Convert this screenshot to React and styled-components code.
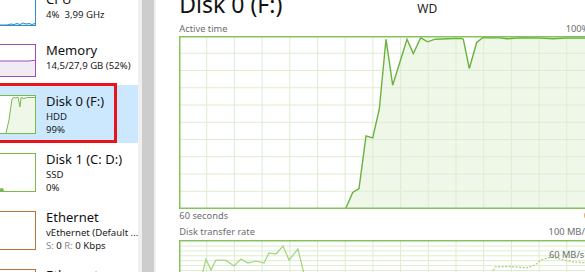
import React from 'react';
import styled, { createGlobalStyle } from 'styled-components';

const GlobalStyle = createGlobalStyle`
  html, body {
    margin: 0;
    padding: 0;
    background: #fff;
    overflow: hidden;
  }
  body {
    font-family: 'Segoe UI', 'Noto Sans', sans-serif;
  }
  #root {
    width: 585px;
    height: 272px;
    overflow: hidden;
  }
`;

const colors = {
  cpu: '#2f8dcb',
  cpuFill: '#dcedf8',
  memory: '#a04bbf',
  memoryFill: '#f1ecf3',
  disk: '#78ba4e',
  diskFill: '#eef7e8',
  ethernet: '#b8723a',
  gridLine: '#dcedd0',
  chartBorder: '#86c35f',
  chartLine: '#6ab23e',
  chartLineLight: '#a3d37a',
  label: '#6d6d6d',
};

const StyledWindow = styled.div`
  display: flex;
  width: 585px;
  height: 272px;
  overflow: hidden;
`;

const StyledSidebar = styled.div`
  flex: 0 0 168px;
  margin-left: -30px;
  margin-top: -17px;
`;

const StyledItem = styled.div`
  position: relative;
  display: flex;
  align-items: flex-start;
  gap: 10px;
  box-sizing: border-box;
  height: ${({ $lines }) => ($lines === 3 ? 58 : 51)}px;
  padding: 10px 0 0 6px;
  background: ${({ $selected }) => ($selected ? '#cce8ff' : 'transparent')};

  &::after {
    content: '';
    display: ${({ $selected }) => ($selected ? 'block' : 'none')};
    position: absolute;
    top: -2px;
    bottom: 0;
    left: 18px;
    right: 21px;
    border: 3px solid #e8141c;
  }
`;

const StyledThumb = styled.div`
  flex: 0 0 60px;
  height: ${({ $h }) => $h}px;
  box-sizing: border-box;
  border: 1px solid ${({ $color }) => $color};
  background: #fff;
  overflow: hidden;

  svg {
    display: block;
  }
`;

const StyledText = styled.div`
  flex: 1;
  min-width: 0;
  margin-top: -3px;
  color: #1a1a1a;
`;

const StyledItemTitle = styled.div`
  font-size: 13px;
  line-height: 18px;
  color: #111;
  white-space: nowrap;
`;

const StyledItemLine = styled.div`
  font-size: 9.6px;
  line-height: 13px;
  white-space: nowrap;
  overflow: hidden;
`;

const StyledMuted = styled.span`
  color: #8a8a8a;
`;

const StyledScrollbar = styled.div`
  flex: 0 0 18px;
  box-sizing: border-box;
  padding: 0 2px 0 4px;
  background: #f0f0f0;

  div {
    height: 100%;
    background: #cdcdcd;
  }
`;

const StyledMain = styled.div`
  flex: 0 0 410px;
  padding-left: 23px;
`;

const StyledHeader = styled.div`
  display: grid;
  grid-template-columns: 238px auto;
  align-items: baseline;
  height: 28px;
  margin-top: -10px;
`;

const StyledTitle = styled.h1`
  margin: 0;
  font-size: 23px;
  line-height: 28px;
  font-weight: 400;
  color: #111;
  white-space: nowrap;
`;

const StyledModel = styled.span`
  font-size: 12px;
  color: #222;
`;

const StyledLabelRow = styled.div`
  display: flex;
  justify-content: space-between;
  margin-top: ${({ $mt }) => $mt || 0}px;
  font-size: 9.3px;
  line-height: 14px;
  color: ${colors.label};
  white-space: nowrap;
`;

const StyledChart = styled.div`
  position: relative;
  height: ${({ $h }) => $h}px;
  margin-top: ${({ $mt }) => $mt || 0}px;

  svg {
    display: block;
  }
`;

const StyledChartNote = styled.span`
  position: absolute;
  top: 8px;
  right: 5px;
  font-size: 9.3px;
  line-height: 14px;
  color: ${colors.label};
`;

const toPath = (pts) => pts.map(([x, y]) => `${x},${y}`).join(' ');

const CpuThumb = () => {
  const pts = [
    [0, 31], [30, 31], [34, 30], [37, 30.5], [40, 29.5], [43, 30.5], [46, 29], [49, 30],
    [52, 29.5], [55, 30.5], [58, 29.5], [60, 30],
  ];
  return (
    <svg width="58" height="31" viewBox="0 0 58 31">
      <polygon points={`${toPath(pts)} 60,31 0,31`} fill={colors.cpuFill} />
      <polyline points={toPath(pts)} fill="none" stroke={colors.cpu} strokeWidth="1" />
    </svg>
  );
};

const MemoryThumb = () => {
  const pts = [[0, 16], [52, 16], [56, 15.5], [60, 15]];
  return (
    <svg width="58" height="31" viewBox="0 0 58 31">
      <polygon points={`${toPath(pts)} 60,31 0,31`} fill={colors.memoryFill} />
      <polyline points={toPath(pts)} fill="none" stroke={colors.memory} strokeWidth="1" />
    </svg>
  );
};

const DiskThumb = () => {
  const pts = [
    [29, 37], [32, 24], [34, 10], [35, 3], [37, 1.5], [39, 2], [41, 1], [43, 11],
    [44, 1.5], [47, 2.5], [50, 1.5], [58, 1.5],
  ];
  return (
    <svg width="58" height="37" viewBox="0 0 58 37">
      <polygon points={`${toPath(pts)} 58,37 29,37`} fill={colors.diskFill} />
      <polyline points={toPath(pts)} fill="none" stroke={colors.disk} strokeWidth="1" />
    </svg>
  );
};

const IdleDiskThumb = () => (
  <svg width="58" height="37" viewBox="0 0 58 37">
    <polygon points="23,37 23,34.5 26,34 27,37" fill={colors.disk} />
  </svg>
);

const NetworkThumb = ({ spikes }) => (
  <svg width="58" height="37" viewBox="0 0 58 37">
    {spikes &&
      [31, 54].map((x) => (
        <line key={x} x1={x} y1="3" x2={x} y2="37" stroke={colors.ethernet} strokeWidth="1" />
      ))}
  </svg>
);

const SidebarItem = ({ lines, selected, color, thumb, title, children }) => (
  <StyledItem $lines={lines} $selected={selected}>
    <StyledThumb $color={color} $h={lines === 3 ? 39 : 33}>
      {thumb}
    </StyledThumb>
    <StyledText>
      <StyledItemTitle>{title}</StyledItemTitle>
      {children}
    </StyledText>
  </StyledItem>
);

const COL = 27.7;

const Grid = ({ width, height, rowStep, rowStart }) => {
  const cols = [];
  for (let x = COL; x < width; x += COL) cols.push(x);
  const rows = [];
  for (let y = rowStart; y < height; y += rowStep) rows.push(y);
  return (
    <g stroke={colors.gridLine} strokeWidth="1">
      {cols.map((x) => (
        <line key={`c${x}`} x1={x} y1="0" x2={x} y2={height} />
      ))}
      {rows.map((y) => (
        <line key={`r${y}`} x1="0" y1={y} x2={width} y2={y} />
      ))}
    </g>
  );
};

const activeTime = [
  [345.7, 210], [352.7, 194], [359, 190], [366, 137.3], [372.7, 139.3], [379.3, 110.7],
  [386, 40.7], [392.7, 86.7], [407, 40.7], [413.3, 55], [420.7, 39.3], [427.7, 43.3],
  [435, 40.7], [453.3, 40], [461.7, 40], [463.3, 40.7], [469.3, 70], [476.7, 44],
  [482.7, 39.3], [500, 39.3], [506.7, 40.3], [520, 39.3], [540, 39.5], [553, 40.2],
  [566.7, 39.5], [589, 39.5],
].map(([x, y]) => [x - 179, y - 37.5]);

const readRate = [
  [196, 60], [206, 19], [211, 30], [216, 20], [226, 20.4], [234, 26], [241, 19],
  [248, 23], [256, 21], [264, 23], [269, 13], [276, 14], [283, 6], [289, 20], [298, 9],
  [304, 34],
].map(([x, y]) => [x - 179, y]);

const writeRate = [
  [310, 40], [316, 27], [330, 26.5], [348, 27.7], [356, 25], [362, 20], [372, 17],
  [385, 20], [395, 22], [410, 23],
];

const ActiveChart = () => {
  const w = 410;
  const h = 173;
  return (
    <svg width={w} height={h} viewBox={`0 0 ${w} ${h}`}>
      <polygon points={`${toPath(activeTime)} ${w},${h} ${activeTime[0][0]},${h}`} fill={colors.diskFill} />
      <Grid width={w} height={h} rowStep={17.25} rowStart={17.25} />
      <polyline points={toPath(activeTime)} fill="none" stroke={colors.chartLine} strokeWidth="1.4" />
      <rect x="0.75" y="0.75" width={w - 1.5} height={h - 1.5} fill="none" stroke={colors.chartBorder} strokeWidth="1.5" />
    </svg>
  );
};

const TransferChart = () => {
  const w = 410;
  const h = 100;
  return (
    <svg width={w} height={h} viewBox={`0 0 ${w} ${h}`}>
      <Grid width={w} height={h} rowStep={4.9} rowStart={6} />
      <polyline points={toPath(readRate)} fill="none" stroke={colors.chartLineLight} strokeWidth="1.2" />
      <polyline
        points={toPath(writeRate)}
        fill="none"
        stroke={colors.chartLineLight}
        strokeWidth="1.2"
        strokeDasharray="2 1.5"
      />
      <rect x="0.75" y="0.75" width={w - 1.5} height={h + 10} fill="none" stroke={colors.chartBorder} strokeWidth="1.5" />
    </svg>
  );
};

const App = () => (
  <>
    <GlobalStyle />
    <StyledWindow>
      <StyledSidebar>
        <SidebarItem lines={2} color={colors.cpu} thumb={<CpuThumb />} title="CPU">
          <StyledItemLine>4%&nbsp;&nbsp;3,99 GHz</StyledItemLine>
        </SidebarItem>
        <SidebarItem lines={2} color={colors.memory} thumb={<MemoryThumb />} title="Memory">
          <StyledItemLine>14,5/27,9 GB (52%)</StyledItemLine>
        </SidebarItem>
        <SidebarItem lines={3} selected color={colors.disk} thumb={<DiskThumb />} title="Disk 0 (F:)">
          <StyledItemLine>HDD</StyledItemLine>
          <StyledItemLine>99%</StyledItemLine>
        </SidebarItem>
        <SidebarItem lines={3} color={colors.disk} thumb={<IdleDiskThumb />} title="Disk 1 (C: D:)">
          <StyledItemLine>SSD</StyledItemLine>
          <StyledItemLine>0%</StyledItemLine>
        </SidebarItem>
        <SidebarItem lines={3} color={colors.ethernet} thumb={<NetworkThumb />} title="Ethernet">
          <StyledItemLine>vEthernet (Default ...</StyledItemLine>
          <StyledItemLine>
            <StyledMuted>S:</StyledMuted> 0 <StyledMuted>R:</StyledMuted> 0 Kbps
          </StyledItemLine>
        </SidebarItem>
        <SidebarItem lines={3} color={colors.ethernet} thumb={<NetworkThumb spikes />} title="Ethernet">
          <StyledItemLine>vEthernet</StyledItemLine>
        </SidebarItem>
      </StyledSidebar>

      <StyledScrollbar>
        <div />
      </StyledScrollbar>

      <StyledMain>
        <StyledHeader>
          <StyledTitle>Disk 0 (F:)</StyledTitle>
          <StyledModel>WD</StyledModel>
        </StyledHeader>

        <StyledLabelRow $mt={4}>
          <span>Active time</span>
          <span>100%</span>
        </StyledLabelRow>
        <StyledChart $h={173}>
          <ActiveChart />
        </StyledChart>
        <StyledLabelRow>
          <span>60 seconds</span>
          <span>0</span>
        </StyledLabelRow>
        <StyledLabelRow $mt={2}>
          <span>Disk transfer rate</span>
          <span>100 MB/s</span>
        </StyledLabelRow>
        <StyledChart $h={100} $mt={1}>
          <TransferChart />
          <StyledChartNote>60 MB/s</StyledChartNote>
        </StyledChart>
      </StyledMain>
    </StyledWindow>
  </>
);

export default App;
